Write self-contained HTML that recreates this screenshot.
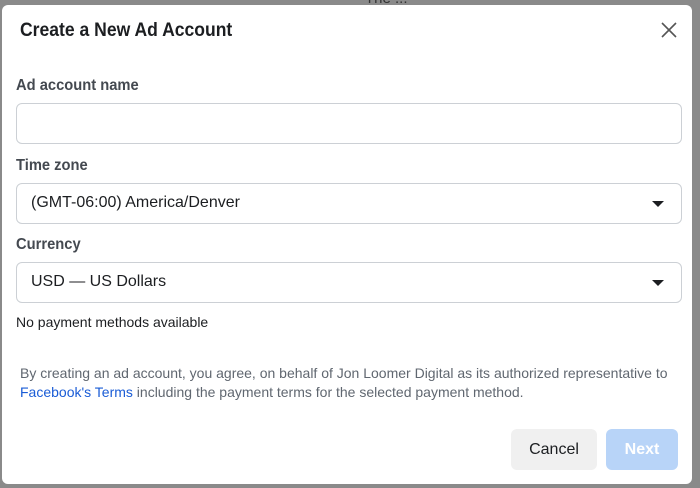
<!DOCTYPE html>
<html><head><style>
*{box-sizing:border-box;margin:0;padding:0}
body{width:700px;height:488px;background:#8a8a8a;font-family:"Liberation Sans",sans-serif;position:relative;overflow:hidden}
.m{position:absolute;left:2px;top:5px;width:690px;height:479px;background:#fff;border-radius:6px}
.a{position:absolute;white-space:nowrap}
.t{left:18px;top:14px;font-size:19.5px;font-weight:bold;color:#1c1e21;transform:scaleX(.9);transform-origin:left}
.l{font-size:16px;font-weight:bold;color:#444950;transform:scaleX(.92);transform-origin:left}
.f{position:absolute;left:14px;width:666px;height:41px;border:1px solid #ccd0d5;border-radius:6px;font-size:16px;color:#1c1e21;padding:10px 14px}
.car{position:absolute;right:17px;top:17px;width:0;height:0;border-left:6px solid transparent;border-right:6px solid transparent;border-top:6px solid #1c1e21}
.p{left:18px;top:359px;font-size:14px;line-height:19px;color:#606770}
.b{position:absolute;top:424px;height:41px;border-radius:6px;font-size:16px;text-align:center;line-height:41px}
</style></head><body>
<div class="a" style="left:365px;top:-10px;font-size:15px;color:#333">The ...</div>
<div class="m">
<div class="a t">Create a New Ad Account</div>
<svg class="a" style="left:659px;top:17px" width="16" height="16"><path d="M1 1L15 15M15 1L1 15" stroke="#555" stroke-width="1.6"/></svg>
<div class="a l" style="left:14px;top:72px">Ad account name</div>
<div class="f" style="top:98px"></div>
<div class="a l" style="left:14px;top:152px">Time zone</div>
<div class="f" style="top:178px">(GMT-06:00) America/Denver<div class="car"></div></div>
<div class="a l" style="left:14px;top:231px">Currency</div>
<div class="f" style="top:257px">USD — US Dollars<div class="car"></div></div>
<div class="a" style="left:14px;top:309px;font-size:14px;color:#1c1e21">No payment methods available</div>
<div class="a p">By creating an ad account, you agree, on behalf of Jon Loomer Digital as its authorized representative to<br><span style="color:#1a5cd6">Facebook's Terms</span> including the payment terms for the selected payment method.</div>
<div class="b" style="left:509px;width:86px;background:#f0f0f0;color:#1c1e21">Cancel</div>
<div class="b" style="left:604px;width:72px;background:#b8d4f8;color:#fff;font-weight:bold">Next</div>
</div>
</body></html>
